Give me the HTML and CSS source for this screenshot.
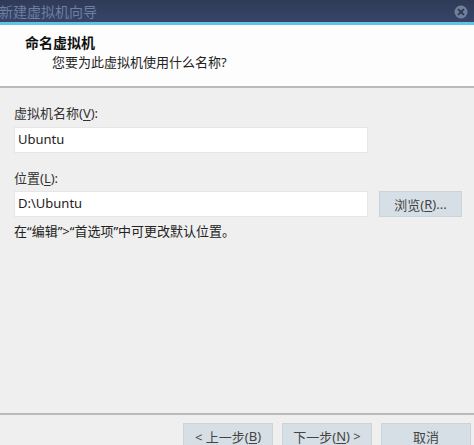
FILE: index.html
```html
<!DOCTYPE html>
<html lang="zh-CN">
<head>
<meta charset="utf-8">
<title>新建虚拟机向导</title>
<link rel="stylesheet" href="styles.css">
</head>
<body>
<div class="window">
  <div class="titlebar">
    <span class="title">新建虚拟机向导</span>
    <span class="close" aria-label="关闭">
      <svg width="14" height="14" viewBox="0 0 14 14">
        <circle cx="7" cy="7" r="6.5" fill="#6f7f9c"/>
        <path d="M4.6 4.6 L9.4 9.4 M9.4 4.6 L4.6 9.4" stroke="#2f3a55" stroke-width="2" stroke-linecap="round"/>
      </svg>
    </span>
  </div>
  <div class="header">
    <div class="h-title">命名虚拟机</div>
    <div class="h-sub">您要为此虚拟机使用什么名称?</div>
  </div>
  <div class="content">
    <div class="label">虚拟机名称(<u>V</u>):</div>
    <div class="row">
      <div class="input">Ubuntu</div>
    </div>
    <div class="label label2">位置(<u>L</u>):</div>
    <div class="row row2">
      <div class="input">D:\Ubuntu</div>
      <div class="btn browse">浏览(<u>R</u>)...</div>
    </div>
    <div class="hint">在“编辑”&gt;“首选项”中可更改默认位置。</div>
  </div>
  <div class="footer">
    <div class="btn fbtn">&lt; 上一步(<u>B</u>)</div>
    <div class="btn fbtn">下一步(<u>N</u>) &gt;</div>
    <div class="btn fbtn">取消</div>
  </div>
</div>
</body>
</html>
```
FILE: styles.css
```css
html, body {
  margin: 0;
  padding: 0;
}
body {
  width: 474px;
  height: 445px;
  overflow: hidden;
  background: #efefef;
  font-family: "Noto Sans", "Noto Sans CJK SC", sans-serif;
  color: #222;
}
.window {
  display: flex;
  flex-direction: column;
  height: 445px;
}
.titlebar {
  height: 22px;
  flex: none;
  background: linear-gradient(#2f3a56, #38456a);
  border-bottom: 3px solid #62c3e4;
  display: flex;
  align-items: center;
  justify-content: space-between;
  padding: 0 6px 0 0;
}
.title {
  color: #6d7fa2;
  font-size: 14px;
  line-height: 22px;
  font-family: "Noto Sans CJK SC", sans-serif;
  margin-left: -1px;
}
.close {
  display: flex;
  margin-top: 1px;
}
.header {
  height: 63px;
  flex: none;
  background: #fdfdfd;
  border-bottom: 2px solid #b7bbbf;
  box-sizing: border-box;
  padding-top: 8px;
}
.h-title {
  font-weight: bold;
  font-size: 14px;
  line-height: 18px;
  margin-left: 25px;
  color: #111;
  font-family: "Noto Sans CJK SC", sans-serif;
}
.h-sub {
  font-size: 13px;
  line-height: 18px;
  margin-left: 52px;
  margin-top: 2px;
  color: #222;
}
.content {
  flex: 1;
  padding: 16px 0 0 14px;
  font-size: 13px;
}
.label {
  line-height: 18px;
  color: #333;
}
.label2 {
  margin-top: 16px;
}
.row {
  display: flex;
  align-items: center;
  gap: 11px;
  margin-top: 5px;
}
.row2 {
  margin-top: 4px;
}
.input {
  width: 354px;
  height: 26px;
  box-sizing: border-box;
  background: #fff;
  border: 1px solid #e6e6e6;
  padding-left: 3px;
  line-height: 22px;
  color: #222;
}
.btn {
  background: #d7dfe6;
  border: 1px solid #ccd4db;
  box-sizing: border-box;
  display: flex;
  align-items: center;
  justify-content: center;
  color: #444;
  font-size: 13px;
}
.browse {
  width: 83px;
  height: 26px;
}
.hint {
  margin-top: 5px;
  line-height: 18px;
  color: #222;
}
.footer {
  height: 32px;
  flex: none;
  border-top: 2px solid #b7bbbf;
  box-sizing: border-box;
  display: flex;
  justify-content: flex-end;
  gap: 9px;
  padding: 8px 3px 0 0;
}
.fbtn {
  width: 90px;
  height: 26px;
}
u {
  text-decoration-thickness: 1px;
  text-underline-offset: 2px;
}
```
